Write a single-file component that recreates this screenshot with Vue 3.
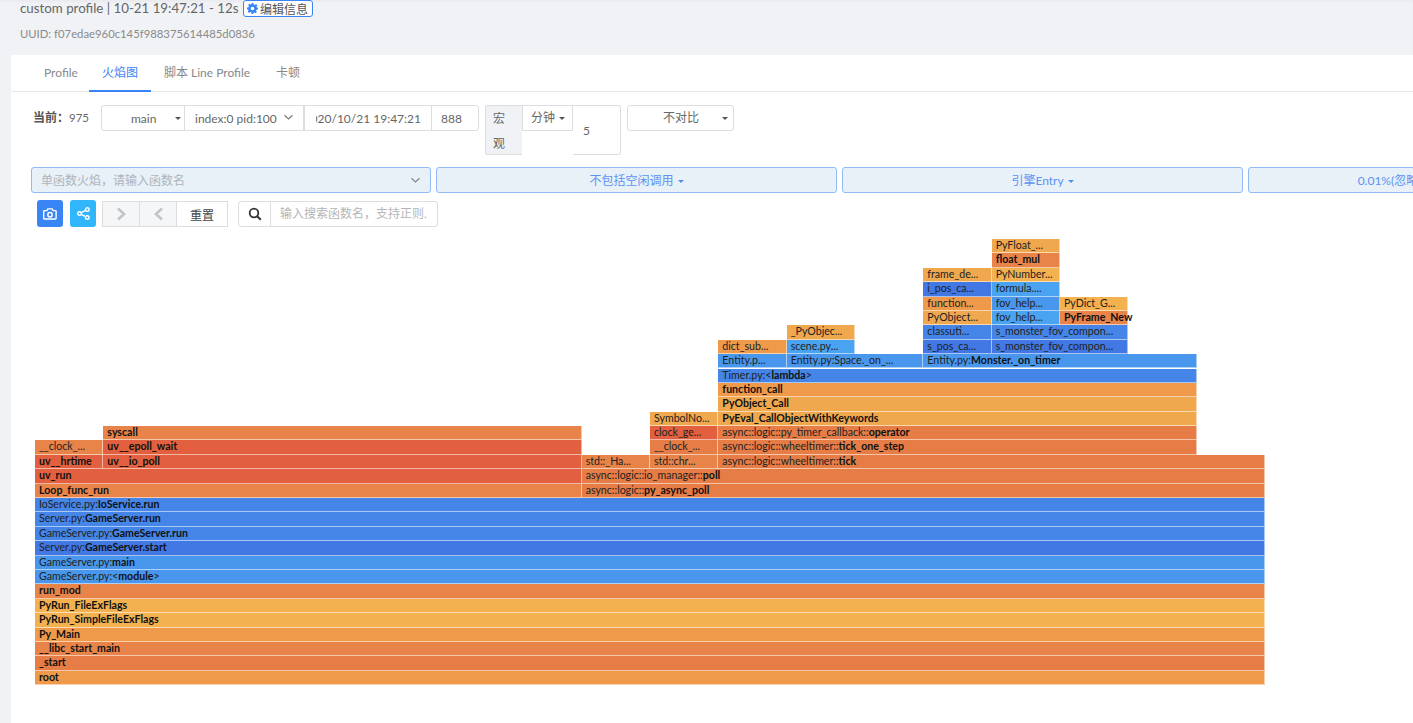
<script setup>
const U = 68.333
const colors = { a:'#ef9a4b', b:'#e8844a', c:'#e67c46', d:'#e2603f', e:'#f3b150', f:'#f0a84e', g:'#4585e8', h:'#4897ec', i:'#4178e4', j:'#4aa3f0' }
const raw = [
  [0,0,18,'','root','a'],[1,0,18,'','_start','c'],[2,0,18,'','__libc_start_main','b'],[3,0,18,'','Py_Main','a'],
  [4,0,18,'','PyRun_SimpleFileExFlags','e'],[5,0,18,'','PyRun_FileExFlags','e'],[6,0,18,'','run_mod','b'],
  [7,0,18,'GameServer.py:','<module>','h',true],[8,0,18,'GameServer.py:','main','h'],[9,0,18,'Server.py:','GameServer.start','i'],
  [10,0,18,'GameServer.py:','GameServer.run','g'],[11,0,18,'Server.py:','GameServer.run','g'],[12,0,18,'IoService.py:','IoService.run','g'],
  [13,0,8,'','Loop_func_run','b'],[13,8,10,'async::logic::','py_async_poll','c'],
  [14,0,8,'','uv_run','d'],[14,8,10,'async::logic::io_manager::','poll','c'],
  [15,0,1,'','uv__hrtime','d'],[15,1,7,'','uv__io_poll','d'],[15,8,1,'std::_Ha...','','b'],[15,9,1,'std::chr...','','b'],[15,10,8,'async::logic::wheeltimer::','tick','c'],
  [16,0,1,'__clock_...','','b'],[16,1,7,'','uv__epoll_wait','d'],[16,9,1,'__clock_...','','c'],[16,10,7,'async::logic::wheeltimer::','tick_one_step','c'],
  [17,1,7,'','syscall','b'],[17,9,1,'clock_ge...','','d'],[17,10,7,'async::logic::py_timer_callback::','operator','c'],
  [18,9,1,'SymbolNo...','','f'],[18,10,7,'','PyEval_CallObjectWithKeywords','f'],
  [19,10,7,'','PyObject_Call','f'],[20,10,7,'','function_call','a'],[21,10,7,'Timer.py:','<lambda>','g',true],
  [22,10,1,'Entity.p...','','h'],[22,11,2,'Entity.py:Space._on_...','','h'],[22,13,4,'Entity.py:','Monster._on_timer','h'],
  [23,10,1,'dict_sub...','','a'],[23,11,1,'scene.py...','','j'],[23,13,1,'s_pos_ca...','','i'],[23,14,2,'s_monster_fov_compon...','','i'],
  [24,11,1,'_PyObjec...','','f'],[24,13,1,'classuti...','','g'],[24,14,2,'s_monster_fov_compon...','','g'],
  [25,13,1,'PyObject...','','f'],[25,14,1,'fov_help...','','j'],[25,15,1,'','PyFrame_New','b'],
  [26,13,1,'function...','','a'],[26,14,1,'fov_help...','','h'],[26,15,1,'PyDict_G...','','e'],
  [27,13,1,'i_pos_ca...','','i'],[27,14,1,'formula....','','j'],
  [28,13,1,'frame_de...','','f'],[28,14,1,'PyNumber...','','e'],
  [29,14,1,'','float_mul','b'],[30,14,1,'PyFloat_...','','f']
]
const nodes = raw.map(([lv, start, w, pre, bold, c, angle]) => {
  let b = bold, post = ''
  if (angle) { b = bold.slice(1, -1); post = '>' }
  return {
    key: lv + '-' + start, pre: angle ? pre + '<' : pre, bold: b, post,
    style: { left: start * U + 'px', width: w * U + 'px', top: (30 - lv) * 14.39 + 'px', background: colors[c] }
  }
})
</script>

<template>
  <div class="page">
    <header class="head">
      <div class="title">
        <span>custom profile | 10-21 19:47:21 - 12s</span>
        <button class="edit">
          <svg width="11" height="11" viewBox="0 0 24 24"><path fill="#3a85f5" fill-rule="evenodd" d="M10 0h4l.7 3.4 2.2.9 2.9-1.9 2.8 2.8-1.9 2.9.9 2.2L24 10v4l-3.4.7-.9 2.2 1.9 2.9-2.8 2.8-2.9-1.9-2.2.9L14 24h-4l-.7-3.4-2.2-.9-2.9 1.9-2.8-2.8 1.9-2.9-.9-2.2L0 14v-4l3.4-.7.9-2.2-1.9-2.9 2.8-2.8 2.9 1.9 2.2-.9zM12 8a4 4 0 1 0 0 8 4 4 0 0 0 0-8z"/></svg>
          编辑信息
        </button>
      </div>
      <div class="uuid">UUID: f07edae960c145f988375614485d0836</div>
    </header>

    <main class="card">
      <nav class="tabs">
        <a class="tab">Profile</a>
        <a class="tab active">火焰图</a>
        <a class="tab">脚本 Line Profile</a>
        <a class="tab">卡顿</a>
      </nav>

      <section class="filters">
        <div class="current"><b>当前：</b><span>975</span></div>
        <div class="group">
          <div class="cell c-main">main<i class="caret dark"></i></div>
          <div class="cell c-pid">index:0 pid:100
            <svg width="11" height="7" viewBox="0 0 11 7"><path d="M1.5 1.2 5.5 5l4-3.8" fill="none" stroke="#777" stroke-width="1.2"/></svg>
          </div>
          <div class="cell c-date"><div class="date-clip"><span>2020/10/21 19:47:21</span></div></div>
          <div class="cell c-num">888</div>
        </div>
        <div class="macro">
          <div class="macro-label">宏<br>观</div>
          <div class="macro-unit">分钟<i class="caret dark"></i></div>
          <div class="macro-val">5</div>
        </div>
        <div class="compare"><span>不对比</span><i class="caret dark"></i></div>
      </section>

      <section class="selects">
        <div class="sel first"><span>单函数火焰，请输入函数名</span>
          <svg width="11" height="7" viewBox="0 0 11 7"><path d="M1.5 1.2 5.5 5l4-3.8" fill="none" stroke="#888" stroke-width="1.2"/></svg>
        </div>
        <div class="sel">不包括空闲调用<i class="caret blue"></i></div>
        <div class="sel">引擎Entry<i class="caret blue"></i></div>
        <div class="sel">0.01%(忽略占比小于该值的函数)<i class="caret blue"></i></div>
      </section>

      <section class="tools">
        <button class="ico cam">
          <svg width="14" height="12" viewBox="0 0 14 12"><path fill="none" stroke="#fff" stroke-width="1.4" d="M4.800.9h4.400l.9 1.700h2.300c.4 0 .7.300.7.700v7c0 .4-.3.700-.7.700H1.400c-.4 0-.7-.3-.7-.7v-7c0-.4.300-.7.700-.7h2.500z"/><circle cx="7" cy="6.800" r="2.200" fill="none" stroke="#fff" stroke-width="1.500"/></svg>
        </button>
        <button class="ico share">
          <svg width="13" height="13" viewBox="0 0 13 13"><g fill="none" stroke="#fff" stroke-width="1.400"><circle cx="2.500" cy="6.500" r="1.800"/><circle cx="10.300" cy="2.500" r="1.800"/><circle cx="10.300" cy="10.500" r="1.800"/><path d="M4.200 5.600 8.600 3.400M4.200 7.400l4.400 2.200"/></g></svg>
        </button>
        <div class="nav">
          <span class="nbtn off"><svg width="11" height="14" viewBox="0 0 11 14"><path d="M2 1.500 8 7l-6 5.500" fill="none" stroke="#c4c4c4" stroke-width="2.600"/></svg></span>
          <span class="nbtn off"><svg width="11" height="14" viewBox="0 0 11 14"><path d="M9 1.500 3 7l6 5.500" fill="none" stroke="#c4c4c4" stroke-width="2.600"/></svg></span>
          <span class="nbtn reset">重置</span>
        </div>
        <div class="search">
          <span class="sico"><svg width="14" height="14" viewBox="0 0 14 14"><circle cx="6" cy="6" r="4.300" fill="none" stroke="#333" stroke-width="1.800"/><path d="m9.200 9.200 3.600 3.600" stroke="#333" stroke-width="2"/></svg></span>
          <span class="sinput">输入搜索函数名，支持正则.</span>
        </div>
      </section>

      <section class="flame">
        <div v-for="n in nodes" :key="n.key" class="node" :style="n.style">{{ n.pre }}<b>{{ n.bold }}</b>{{ n.post }}</div>
      </section>
    </main>
  </div>
</template>

<style>
html, body { margin: 0; height: 100%; overflow: hidden; background: #f0f2f5; }
</style>

<style scoped>
.page { width: 1413px; height: 723px; overflow: hidden; background: #f0f2f5; font-family: Lato, "Noto Sans CJK SC", sans-serif; color: #666; font-size: 12px; box-sizing: border-box; }
.head { height: 55px; padding-left: 20px; box-sizing: border-box; overflow: hidden; box-shadow: inset 0 2px 2px rgba(0,0,0,.03); }
.title { height: 17px; display: flex; align-items: center; gap: 4px; font-size: 13.300px; color: #666; line-height: 17px; }
.edit { height: 17px; width: 70px; padding: 0; margin: 0; border: 1px solid #3a85f5; border-radius: 3px; background: #fff; color: #555; font: 12px "Noto Sans CJK SC", sans-serif; display: flex; align-items: center; justify-content: center; gap: 2px; box-sizing: border-box; }
.uuid { margin-top: 10px; font-size: 11.300px; color: #8a8a8a; line-height: 14px; }
.card { margin-left: 11px; height: 668px; background: #fff; position: relative; width: 1402px; overflow: hidden; }
.tabs { display: flex; height: 36px; padding-left: 20px; border-bottom: 1px solid #e8e8e8; }
.tab { height: 36px; box-sizing: border-box; padding: 0 13px; line-height: 35px; font-size: 12px; color: #888; }
.tab:first-child { padding-right: 11px; }
.tab.active { color: #3a85f5; border-bottom: 2px solid #3a85f5; height: 37px; }
.filters { display: flex; align-items: flex-start; padding: 13px 0 0 22px; height: 62px; box-sizing: content-box; }
.current { width: 68px; height: 26px; line-height: 25px; font-size: 11.500px; color: #666; white-space: nowrap; }
.current b { color: #555; font-size: 12px; }
.group { display: flex; height: 26px; border: 1px solid #ddd; border-radius: 3px; box-sizing: border-box; background: #fff; }
.cell { height: 24px; line-height: 25px; box-sizing: border-box; font-size: 12px; color: #666; position: relative; border-right: 1px solid #ddd; }
.c-main { width: 83px; padding-left: 29px; }
.c-pid { width: 120px; padding-left: 10px; border-right-width: 2px; }
.c-pid svg { position: absolute; right: 9px; top: 8px; }
.c-date { width: 127px; padding: 0 11px; }
.date-clip { width: 105px; overflow: hidden; white-space: nowrap; display: flex; justify-content: flex-end; }
.date-clip span { display: block; flex: none; }
.c-num { width: 46px; padding-left: 9px; border-right: 0; }
.macro { display: grid; grid-template-columns: 37px 51px 48px; margin-left: 6px; height: 50px; width: 136px; }
.macro-label { background: #f0f2f5; border: 1px solid #ddd; border-right: 0; border-radius: 3px 0 0 3px; box-sizing: border-box; height: 50px; padding: 1px 0 0 7px; line-height: 24.500px; font-size: 12px; }
.macro-unit { height: 26px; border: 1px solid #ddd; box-sizing: border-box; line-height: 24px; padding-left: 8px; white-space: nowrap; }
.macro-val { height: 50px; border: 1px solid #ddd; border-left: 0; border-radius: 0 3px 3px 0; box-sizing: border-box; padding: 1px 0 0 10px; line-height: 48px; }
.compare { margin-left: 6px; width: 107px; height: 26px; border: 1px solid #ddd; border-radius: 3px; box-sizing: border-box; line-height: 24px; position: relative; padding-left: 35px; }
.compare .caret { position: absolute; right: 5px; top: 11px; }
.caret { display: inline-block; width: 0; height: 0; border: 3px solid transparent; border-top: 3.500px solid #555; border-bottom: 0; margin-left: 4px; vertical-align: middle; }
.caret.blue { border-top-color: #4d8ff0; }
.c-main .caret { position: absolute; right: 3px; top: 11px; }
.selects { display: grid; grid-template-columns: 400px 401px 401px 401px; column-gap: 5px; padding-left: 20px; }
.sel { height: 26px; border: 1px solid #8fbaf3; border-radius: 3px; background: #e8f0f8; box-sizing: border-box; line-height: 25px; text-align: center; color: #5b93f2; font-size: 12px; white-space: nowrap; overflow: hidden; }
.sel.first { text-align: left; padding-left: 9px; color: #aeb4bb; position: relative; }
.sel.first svg { position: absolute; right: 9px; top: 9px; }
.tools { display: flex; align-items: flex-start; padding: 7px 0 0 26px; }
.ico { width: 26px; height: 27px; border: 0; border-radius: 3px; padding: 0; display: flex; align-items: center; justify-content: center; }
.cam { background: #3a85f5; }
.share { background: #31b5fb; margin-left: 7px; }
.nav { display: flex; margin-left: 6px; height: 26px; border: 1px solid #ddd; box-sizing: border-box; margin-top: 1px; }
.nbtn { height: 24px; display: flex; align-items: center; justify-content: center; box-sizing: border-box; }
.off { width: 37px; background: #f5f6f8; border-right: 1px solid #ddd; }
.reset { width: 50px; font-size: 12px; color: #444; }
.search { display: flex; margin-left: 10px; width: 200px; height: 26px; border: 1px solid #ddd; border-radius: 3px; box-sizing: border-box; margin-top: 1px; }
.sico { width: 32px; border-right: 1px solid #ddd; display: flex; align-items: center; justify-content: center; box-sizing: border-box; }
.sinput { flex: 1; padding-left: 9px; line-height: 24px; color: #b5b5b5; font-size: 12px; white-space: nowrap; overflow: hidden; }
.flame { position: relative; margin: 12px 0 0 24px; width: 1230px; height: 446px; }
.node { position: absolute; height: 14.390px; box-sizing: border-box; border: solid rgba(255,255,255,.55); border-width: 0 1px 1px 0; padding-left: 4px; font-size: 10.600px; line-height: 13.500px; color: #222; white-space: nowrap; overflow: visible; }
.node b { color: #111; }
</style>
